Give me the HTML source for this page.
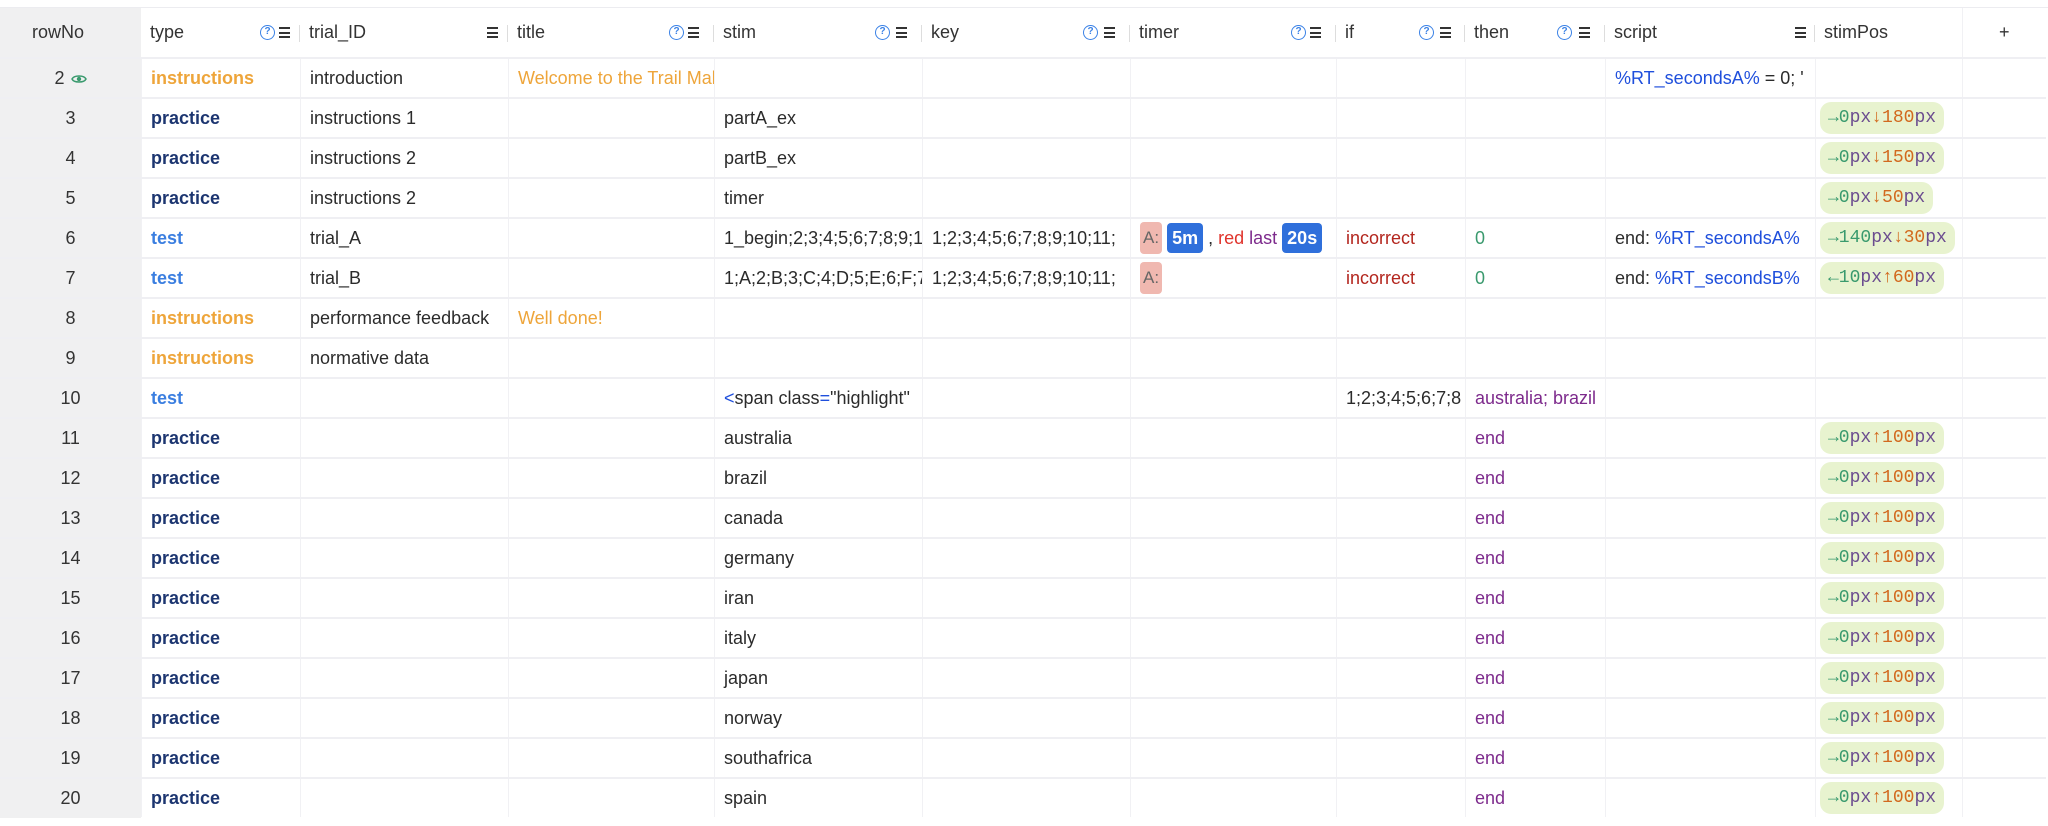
<!DOCTYPE html>
<html><head><meta charset="utf-8"><style>
*{box-sizing:border-box;margin:0;padding:0}
body{width:2048px;height:826px;background:#fff;font-family:"Liberation Sans",Arial,sans-serif;font-size:18px;color:#2b2b2b;position:relative;overflow:hidden}
.top{position:absolute;left:0;top:7px;width:2048px;height:1px;background:#ececf0}
.hdr{position:absolute;top:8px;height:49px;}
.hdr .t{position:absolute;left:9px;top:14px;font-size:18px;color:#333}
.help{position:absolute;top:17px;width:15px;height:15px;border:1.6px solid #3b82e6;border-radius:50%;color:#3b82e6;font-size:10px;font-weight:bold;line-height:12px;text-align:center}
.menu{position:absolute;top:19px;width:11px;height:11px;border-top:2px solid #333;border-bottom:2px solid #333}
.menu:after{content:"";position:absolute;left:0;right:0;top:2.5px;height:2px;background:#333}
.div{position:absolute;top:17px;width:1px;height:17px;background:#ddd}
.rowno{position:absolute;left:0;top:8px;width:141px;height:810px;background:#f0f0f1}
.row{position:absolute;left:0;width:2046px;height:40px;border-top:2px solid #efeff3}
.c{position:absolute;top:0;height:38px;line-height:38px;padding-left:9px;white-space:nowrap;overflow:hidden;border-left:1px solid #f1f1f4}
.n{position:absolute;left:0;width:141px;text-align:center;top:0;line-height:38px;color:#333}
.ins{color:#eea53a;font-weight:bold}
.pra{color:#1c3570;font-weight:bold}
.tst{color:#3a7ee0;font-weight:bold}
.org{color:#eea53a}
.inc{color:#b3261e}
.zero{color:#3a9a6e}
.end{color:#7d2a8c}
.blue{color:#1f4fdc}
.pos{position:absolute;top:3px;left:1820px;height:32px;line-height:32px;padding:0 8px;background:#e8f3cf;border-radius:11px;font-family:"Liberation Mono",monospace;font-size:18px}
.pos .g{color:#3a9a6e}.pos .o{color:#d2691e}.pos .p{color:#6b4c8f}
.pk{display:inline-block;background:#f0b8b0;color:#666;border-radius:4px;padding:0 3px;height:32px;line-height:32px;vertical-align:middle;margin-top:-3px;font-size:17px}
.bl{display:inline-block;background:#2f6fdb;color:#fff;border-radius:4px;padding:0 5px;height:30px;line-height:30px;vertical-align:middle;margin-top:-3px;font-weight:bold}
</style></head><body>
<div class="top"></div>
<div class="rowno"></div>
<div class="hdr" style="left:0;width:141px"><span class="t" style="left:32px">rowNo</span></div>
<div class="hdr" style="left:141px;width:159px"><span class="t">type</span><span class="help" style="left:119px">?</span><span class="menu" style="left:138px"></span><span class="div" style="left:158px"></span></div>
<div class="hdr" style="left:300px;width:208px"><span class="t">trial_ID</span><span class="menu" style="left:187px"></span><span class="div" style="left:207px"></span></div>
<div class="hdr" style="left:508px;width:206px"><span class="t">title</span><span class="help" style="left:161px">?</span><span class="menu" style="left:180px"></span><span class="div" style="left:205px"></span></div>
<div class="hdr" style="left:714px;width:208px"><span class="t">stim</span><span class="help" style="left:161px">?</span><span class="menu" style="left:182px"></span><span class="div" style="left:207px"></span></div>
<div class="hdr" style="left:922px;width:208px"><span class="t">key</span><span class="help" style="left:161px">?</span><span class="menu" style="left:182px"></span><span class="div" style="left:207px"></span></div>
<div class="hdr" style="left:1130px;width:206px"><span class="t">timer</span><span class="help" style="left:161px">?</span><span class="menu" style="left:180px"></span><span class="div" style="left:205px"></span></div>
<div class="hdr" style="left:1336px;width:129px"><span class="t">if</span><span class="help" style="left:83px">?</span><span class="menu" style="left:104px"></span><span class="div" style="left:128px"></span></div>
<div class="hdr" style="left:1465px;width:140px"><span class="t">then</span><span class="help" style="left:92px">?</span><span class="menu" style="left:114px"></span><span class="div" style="left:139px"></span></div>
<div class="hdr" style="left:1605px;width:210px"><span class="t">script</span><span class="menu" style="left:190px"></span><span class="div" style="left:209px"></span></div>
<div class="hdr" style="left:1815px;width:147px"><span class="t">stimPos</span></div>
<div class="hdr" style="left:1962px;width:84px;border-left:1px solid #f1f1f4"><span class="t" style="left:36px">+</span></div>

<div id="rows"></div>
<script>
const L=[141,300,508,714,922,1130,1336,1465,1605,1815,1962];
const W=[159,208,206,208,208,206,129,140,210,147,84];
function pos(a,b,arr){return `<span class="pos"><span class="g">${arr}${a}</span><span class="p">px</span><span class="o">${b}</span><span class="p">px</span></span>`}
const eye='<svg width="16" height="12" viewBox="0 0 16 12" style="vertical-align:middle;margin-left:6px"><path d="M1 6C3 2 13 2 15 6C13 10 3 10 1 6Z" fill="none" stroke="#3a9a6e" stroke-width="1.5"/><circle cx="8" cy="6" r="2.2" fill="#3a9a6e"/></svg>';
const R=[
['2'+eye,'<span class="ins">instructions</span>','introduction','<span class="org">Welcome to the Trail Making Test</span>','','','','','','<span class="blue">%RT_secondsA%</span> = 0; \'','',''],
['3','<span class="pra">practice</span>','instructions 1','','partA_ex','','','','','','p','↓180'],
['4','<span class="pra">practice</span>','instructions 2','','partB_ex','','','','','','p','↓150'],
['5','<span class="pra">practice</span>','instructions 2','','timer','','','','','','p','↓50'],
['6','<span class="tst">test</span>','trial_A','','1_begin;2;3;4;5;6;7;8;9;10','1;2;3;4;5;6;7;8;9;10;11;','<span class="pk">A:</span> <span class="bl">5m</span> , <span style="color:#e0342c">red</span> <span class="end">last</span> <span class="bl">20s</span>','<span class="inc">incorrect</span>','<span class="zero">0</span>','end: <span class="blue">%RT_secondsA%</span>','140','↓30'],
['7','<span class="tst">test</span>','trial_B','','1;A;2;B;3;C;4;D;5;E;6;F;7','1;2;3;4;5;6;7;8;9;10;11;','<span class="pk">A:</span>','<span class="inc">incorrect</span>','<span class="zero">0</span>','end: <span class="blue">%RT_secondsB%</span>','m10','↑60'],
['8','<span class="ins">instructions</span>','performance feedback','<span class="org">Well done!</span>','','','','','','','',''],
['9','<span class="ins">instructions</span>','normative data','','','','','','','','',''],
['10','<span class="tst">test</span>','','','<span class="blue">&lt;</span>span class<span class="blue">=</span>"highlight"','','','1;2;3;4;5;6;7;8','<span class="end">australia; brazil</span>','','',''],
];
['australia','brazil','canada','germany','iran','italy','japan','norway','southafrica','spain'].forEach((s,i)=>R.push([String(11+i),'<span class="pra">practice</span>','','',s,'','','','<span class="end">end</span>','','p','↑100']));
let h='';
R.forEach((r,i)=>{
 let top=57+40*i;
 h+=`<div class="row" style="top:${top}px"><div class="n">${r[0]}</div>`;
 for(let k=0;k<9;k++){
  h+=`<div class="c" style="left:${L[k]}px;width:${W[k]}px">${r[k+1]}</div>`;
 }
 h+=`<div class="c" style="left:1815px;width:147px"></div><div class="c" style="left:1962px;width:84px"></div>`;
 if(r[10]){
  let a=r[10]==='p'?'0':r[10].replace('m','');
  let arr=r[10]==='m10'?'←':'→';
  let d=r[11];
  h+=pos(a,d.slice(1),arr).replace('<span class="o">','<span class="o">'+d[0]);
 }
 h+='</div>';
});
document.getElementById('rows').innerHTML=h;
</script>
</body></html>
